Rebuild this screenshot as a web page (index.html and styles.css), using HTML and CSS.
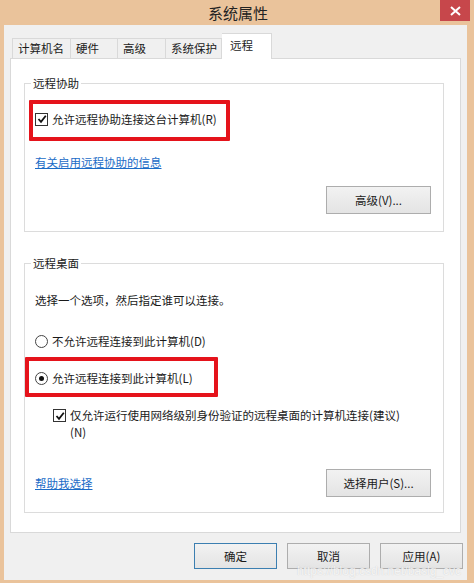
FILE: index.html
```html
<!DOCTYPE html>
<html>
<head>
  <meta charset="utf-8">
  <title>系统属性</title>
  <link rel="stylesheet" href="styles.css">
</head>
<body>
  <div class="window">
    <div class="titlebar">
      <span class="title">系统属性</span>
      <div class="close-btn">
        <svg width="11" height="10" viewBox="0 0 11 10"><path d="M1 1 L10 9 M10 1 L1 9" stroke="#fff" stroke-width="2"/></svg>
      </div>
    </div>

    <div class="client">
      <div class="tabs">
        <div class="tab tab-w1">计算机名</div>
        <div class="tab tab-w2">硬件</div>
        <div class="tab tab-w3">高级</div>
        <div class="tab tab-w4">系统保护</div>
        <div class="tab active">远程</div>
      </div>

      <div class="panel">
        <fieldset class="group group-assist">
          <legend>远程协助</legend>
          <div class="mark mark-assist">
            <label class="option">
              <span class="checkbox">
                <svg width="10" height="10" viewBox="0 0 10 10"><path d="M1.5 5 L4 7.8 L8.8 1.8" fill="none" stroke="#111" stroke-width="1.8"/></svg>
              </span>
              允许远程协助连接这台计算机(R)
            </label>
          </div>
          <a class="link link-info" href="#">有关启用远程协助的信息</a>
          <button class="btn btn-right">高级(V)...</button>
        </fieldset>

        <fieldset class="group group-desktop">
          <legend>远程桌面</legend>
          <p class="hint">选择一个选项，然后指定谁可以连接。</p>
          <label class="option radio-first">
            <span class="radio"></span>
            不允许远程连接到此计算机(D)
          </label>
          <div class="mark mark-desktop">
            <label class="option">
              <span class="radio checked"><span class="dot"></span></span>
              允许远程连接到此计算机(L)
            </label>
          </div>
          <label class="option option-sub">
            <span class="checkbox">
              <svg width="10" height="10" viewBox="0 0 10 10"><path d="M1.5 5 L4 7.8 L8.8 1.8" fill="none" stroke="#111" stroke-width="1.8"/></svg>
            </span>
            <span class="sub-text">仅允许运行使用网络级别身份验证的远程桌面的计算机连接(建议)<br>(N)</span>
          </label>
          <div class="row-bottom">
            <a class="link" href="#">帮助我选择</a>
            <button class="btn">选择用户(S)...</button>
          </div>
        </fieldset>
      </div>

      <div class="actions">
        <button class="btn btn-small default">确定</button>
        <button class="btn btn-small">取消</button>
        <button class="btn btn-small">应用(A)</button>
        <span class="watermark">https://blog.csdn.net/baslg_cvc</span>
      </div>
    </div>
  </div>
</body>
</html>
```

FILE: styles.css
```css
body {
  margin: 0;
  font-family: "Noto Sans CJK SC", "Liberation Sans", sans-serif;
  font-size: 11.5px;
  color: #1a1a1a;
  background: #eac39b;
}

.window {
  width: 474px;
  height: 583px;
  background: #eac39b;
  display: flex;
  flex-direction: column;
  box-sizing: border-box;
}

/* title bar */
.titlebar {
  height: 25px;
  position: relative;
  display: flex;
  justify-content: center;
  align-items: center;
  flex-shrink: 0;
}

.title {
  font-size: 15px;
  color: #222;
  margin-left: 2px;
}

.close-btn {
  position: absolute;
  top: 0;
  right: 4px;
  width: 30px;
  height: 21px;
  background: #c7474b;
  display: flex;
  align-items: center;
  justify-content: center;
}

/* client area */
.client {
  flex: 1;
  margin: 0 7px 3px 4px;
  background: #f0f0f0;
  padding: 8px 6px 0 6px;
  position: relative;
}

.tabs {
  display: flex;
  align-items: flex-end;
  height: 25px;
  padding-left: 2px;
  position: relative;
  z-index: 1;
}

.tab {
  height: 20px;
  line-height: 19px;
  box-sizing: border-box;
  border: 1px solid #d9d9d9;
  border-bottom: none;
  border-right: none;
  padding-left: 5px;
  background: #f0f0f0;
}

.tab-w1 { width: 58px; }
.tab-w2 { width: 47px; }
.tab-w3 { width: 48px; }
.tab-w4 { width: 57px; border-right: 1px solid #d9d9d9; }

.tab.active {
  width: 50px;
  height: 26px;
  margin-bottom: -1px;
  line-height: 22px;
  padding-left: 8px;
  background: #fff;
  border: 1px solid #d9d9d9;
  border-bottom: none;
  border-left: none;
}

.panel {
  height: 475px;
  box-sizing: border-box;
  background: #fff;
  border: 1px solid #d9d9d9;
  padding: 16px 0 0 13px;
}

/* group boxes */
.group {
  width: 420px;
  box-sizing: border-box;
  margin: 0;
  border: 1px solid #dcdcdc;
  padding: 0 12px 17px 10px;
  display: flex;
  flex-direction: column;
  align-items: flex-start;
}

.group legend {
  padding: 0 2px;
  margin-left: -4px;
  line-height: 16px;
}

.group-desktop {
  margin-top: 23px;
  padding-bottom: 15px;
}

.option {
  display: flex;
  align-items: center;
  height: 16px;
  line-height: 16px;
  white-space: nowrap;
}

.checkbox {
  width: 11px;
  height: 11px;
  border: 1px solid #333;
  margin-right: 4px;
  display: flex;
  align-items: center;
  justify-content: center;
  background: #fff;
  flex-shrink: 0;
}

.radio {
  width: 11px;
  height: 11px;
  border: 1px solid #444;
  border-radius: 50%;
  margin-right: 4px;
  display: flex;
  align-items: center;
  justify-content: center;
  background: #fff;
  flex-shrink: 0;
}

.radio .dot {
  width: 5px;
  height: 5px;
  border-radius: 50%;
  background: #111;
}

/* red highlight frames */
.mark {
  border: 4px solid #e5131b;
  border-radius: 1px;
  box-sizing: border-box;
}

.mark-assist {
  margin: 9px 0 0 -6px;
  width: 201px;
  padding: 7px 0 10px 2px;
}

.mark-desktop {
  margin: 8px 0 0 -10px;
  width: 193px;
  padding: 9px 0 7px 6px;
}

.link {
  color: #1b6cc7;
  text-decoration: underline;
  line-height: 16px;
}

.link-info {
  margin-top: 13px;
}

.btn {
  font-family: inherit;
  font-size: 11.5px;
  color: #1a1a1a;
  width: 105px;
  height: 28px;
  border: 1px solid #adadad;
  background: linear-gradient(#f2f2f2, #e4e4e4);
  padding: 0;
}

.btn-right {
  align-self: flex-end;
  margin-top: 16px;
}

.hint {
  margin: 21px 0 0;
  line-height: 16px;
}

.radio-first {
  margin-top: 25px;
}

.option-sub {
  margin: 10px 0 0 18px;
  height: auto;
  align-items: flex-start;
}

.option-sub .checkbox {
  margin-top: 2px;
}

.sub-text {
  line-height: 17px;
  white-space: normal;
}

.row-bottom {
  margin-top: 28px;
  width: 100%;
  display: flex;
  justify-content: space-between;
  align-items: center;
}

/* dialog buttons */
.actions {
  display: flex;
  justify-content: flex-end;
  gap: 10px;
  margin: 10px -2px 0 0;
  position: relative;
}

.btn-small {
  width: 83px;
  height: 26px;
}

.btn.default {
  border-color: #3c7fb1;
}

.watermark {
  position: absolute;
  right: 2px;
  top: 22px;
  font-family: "Liberation Sans", sans-serif;
  font-size: 12px;
  line-height: 12px;
  color: rgba(255, 255, 255, 0.8);
  text-shadow: 0 0 1px rgba(120, 120, 120, 0.35);
  pointer-events: none;
}
```
